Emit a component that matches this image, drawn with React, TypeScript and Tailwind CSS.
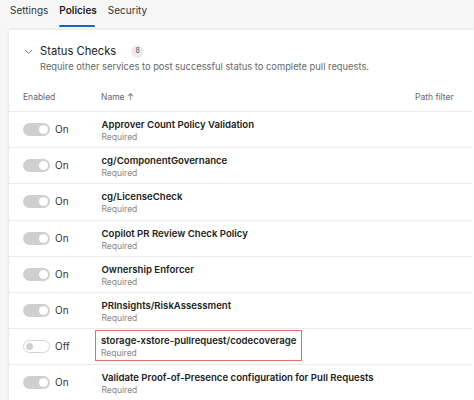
import React from "react";

const rows: { name: string; on: boolean; highlight?: boolean }[] = [
  { name: "Approver Count Policy Validation", on: true },
  { name: "cg/ComponentGovernance", on: true },
  { name: "cg/LicenseCheck", on: true },
  { name: "Copilot PR Review Check Policy", on: true },
  { name: "Ownership Enforcer", on: true },
  { name: "PRInsights/RiskAssessment", on: true },
  { name: "storage-xstore-pullrequest/codecoverage", on: false, highlight: true },
  { name: "Validate Proof-of-Presence configuration for Pull Requests", on: true },
];

function Toggle({ on }: { on: boolean }) {
  if (on) {
    return (
      <div className="w-[27px] h-[13px] rounded-full bg-[#cfcfcf] flex items-center justify-end pr-[2px]">
        <div className="w-[9px] h-[9px] rounded-full bg-white" />
      </div>
    );
  }
  return (
    <div className="w-[27px] h-[13px] rounded-full bg-white border border-[#d4d4d4] flex items-center pl-[2px]">
      <div className="w-[7px] h-[7px] rounded-full bg-[#d0d0d0]" />
    </div>
  );
}

export default function App() {
  return (
    <div
      className="w-[474px] h-[400px] overflow-hidden bg-[#f6f6f6] flex flex-col"
      style={{ fontFamily: "Inter, 'Noto Sans', sans-serif" }}
    >
      <div className="h-[30px] flex items-start pl-[10px] gap-[11px] text-[10px] text-[#333] shrink-0">
        <div className="pt-[3px]">Settings</div>
        <div className="flex flex-col items-start">
          <div className="pt-[3px] font-semibold text-[#222]">Policies</div>
          <div className="mt-[7px] w-[36px] h-[2px] bg-[#0f6cbd] rounded" />
        </div>
        <div className="pt-[3px]">Security</div>
      </div>
      <div className="ml-[9px] flex-1 bg-white shadow-[0_0_3px_rgba(0,0,0,0.12)] flex flex-col">
        <div className="flex pl-[15px] pt-[13px]">
          <div className="w-[16px] pt-[6px]">
            <svg width="9" height="6" viewBox="0 0 9 6" fill="none">
              <path d="M1 1l3.5 3.5L8 1" stroke="#777" strokeWidth="1" />
            </svg>
          </div>
          <div className="flex flex-col">
            <div className="flex items-center gap-[15px]">
              <span className="text-[11.2px] text-[#222] leading-[16px]">Status Checks</span>
              <span className="w-[13px] h-[13px] rounded-full bg-[#ececec] text-[7px] text-[#444] flex items-center justify-center">8</span>
            </div>
            <div className="text-[9.36px] text-[#666] leading-[14px] mt-[1px]">
              Require other services to post successful status to complete pull requests.
            </div>
          </div>
        </div>
        <div className="flex items-center h-[28px] mt-[10px] text-[8.5px] text-[#666] border-b border-[#ebebeb] mr-[2px]">
          <div className="w-[92px] pl-[14px]">Enabled</div>
          <div className="flex-1">Name ↑</div>
          <div className="w-[57px]">Path filter</div>
        </div>
        {rows.map((r) => (
          <div key={r.name} className="flex h-[36.2px] border-b border-[#ebebeb] mr-[2px] shrink-0">
            <div className="w-[86px] pl-[14px] flex items-center gap-[5px]">
              <Toggle on={r.on} />
              <span className="text-[10px] text-[#333]">{r.on ? "On" : "Off"}</span>
            </div>
            {r.highlight ? (
              <div className="mt-[1px] h-[31px] w-[207px] border-[1.5px] border-[#e2725f] pl-[5px] pt-[4px]">
                <div className="text-[9.6px] font-semibold text-[#222] leading-[12px] whitespace-nowrap">{r.name}</div>
                <div className="text-[8.5px] text-[#888] leading-[12px]">Required</div>
              </div>
            ) : (
              <div className="pl-[6.5px] pt-[7px]">
                <div className="text-[9.6px] font-semibold text-[#222] leading-[12px] whitespace-nowrap">{r.name}</div>
                <div className="text-[8.5px] text-[#888] leading-[12px]">Required</div>
              </div>
            )}
          </div>
        ))}
      </div>
    </div>
  );
}
